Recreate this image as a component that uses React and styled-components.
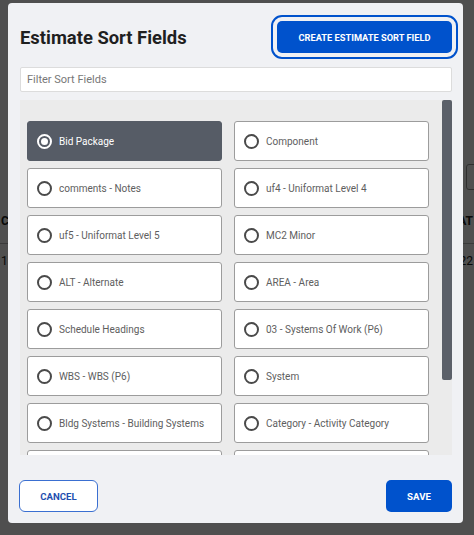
import React, { useState } from 'react'
import styled, { createGlobalStyle } from 'styled-components'

const GlobalStyle = createGlobalStyle`
  html, body {
    margin: 0;
    padding: 0;
    background: #ffffff;
    font-family: Roboto, "Liberation Sans", sans-serif;
  }
  * { box-sizing: border-box; }
`;

const fields = [
    'Bid Package',
    'Component',
    'comments - Notes',
    'uf4 - Uniformat Level 4',
    'uf5 - Uniformat Level 5',
    'MC2 Minor',
    'ALT - Alternate',
    'AREA - Area',
    'Schedule Headings',
    '03 - Systems Of Work (P6)',
    'WBS - WBS (P6)',
    'System',
    'Bldg Systems - Building Systems',
    'Category - Activity Category',
    'Location',
    'Phase',
];

export default function App() {
    const [selected, setSelected] = useState('Bid Package')
    const [filter, setFilter] = useState('')

    const shown = fields.filter((f) => f.toLowerCase().includes(filter.toLowerCase()))

    return (
        <>
            <GlobalStyle />
            <Page>
                <Behind>
                    <div className='toolbar'>
                        <span className='box' />
                    </div>
                    <div className='thead'>
                        <span>C</span>
                        <span>AT</span>
                    </div>
                    <div className='trow'>
                        <span>1</span>
                        <span>22</span>
                    </div>
                </Behind>
                <Overlay>
                    <Dialog>
                        <Header>
                            <Title>Estimate Sort Fields</Title>
                            <PrimaryButton $focused>CREATE ESTIMATE SORT FIELD</PrimaryButton>
                        </Header>
                        <FilterInput
                            placeholder='Filter Sort Fields'
                            value={filter}
                            onChange={(e) => setFilter(e.target.value)}
                        />
                        <Panel>
                            <List>
                                {shown.map((f) => (
                                    <Card key={f} $active={selected === f} onClick={() => setSelected(f)}>
                                        <Radio $active={selected === f} />
                                        <span>{f}</span>
                                    </Card>
                                ))}
                            </List>
                            <Track>
                                <Thumb />
                            </Track>
                        </Panel>
                        <Footer>
                            <OutlineButton>CANCEL</OutlineButton>
                            <PrimaryButton $small>SAVE</PrimaryButton>
                        </Footer>
                    </Dialog>
                </Overlay>
            </Page>
        </>
    )
}

const Page = styled.div`
  position: relative;
  width: 474px;
  height: 535px;
  overflow: hidden;
  background: #ffffff;
`;

const Behind = styled.div`
  padding-top: 164px;
  color: #222;
  font-size: 12px;
  .toolbar {
    height: 34px;
    display: flex;
    justify-content: flex-end;
    .box {
      width: 20px;
      height: 26px;
      margin-right: -12px;
      border: 1px solid #999;
      border-radius: 3px;
    }
  }
  .thead, .trow {
    display: flex;
    justify-content: space-between;
    padding: 0 1px 0 1px;
    height: 46px;
    align-items: center;
    border-bottom: 1px solid #bbb;
    font-weight: 700;
  }
  .trow {
    height: 34px;
    font-weight: 400;
    border-bottom: none;
  }
`;

const Overlay = styled.div`
  position: absolute;
  inset: 0;
  background: rgba(0, 0, 0, 0.69);
  padding: 3px 11px 12px 8px;
  display: flex;
`;

const Dialog = styled.div`
  flex: 1;
  background: #f0f1f4;
  border-radius: 4px;
  display: flex;
  flex-direction: column;
  padding: 18px 11px 11px 12px;
`;

const Header = styled.div`
  display: flex;
  align-items: center;
  justify-content: space-between;
  height: 32px;
`;

const Title = styled.h2`
  margin: 0;
  font-size: 18.4px;
  font-weight: 700;
  color: #1f1f1f;
`;

const PrimaryButton = styled.button`
  height: 32px;
  width: ${(p) => (p.$small ? '66px' : '175px')};
  border: none;
  border-radius: 5px;
  background: #0052cc;
  color: #ffffff;
  font-family: Roboto, "Liberation Sans", sans-serif;
  font-size: ${(p) => (p.$small ? '9.7px' : '9.25px')};
  font-weight: 700;
  cursor: pointer;
  outline: ${(p) => (p.$focused ? '2px solid #0052cc' : 'none')};
  outline-offset: 4px;
`;

const OutlineButton = styled.button`
  height: 32px;
  width: 79px;
  margin-left: -1px;
  border: 1px solid #3a6fd1;
  border-radius: 6px;
  background: #ffffff;
  color: #1f4fb0;
  font-family: Roboto, "Liberation Sans", sans-serif;
  font-size: 9.6px;
  font-weight: 700;
  cursor: pointer;
`;

const FilterInput = styled.input`
  margin-top: 14px;
  height: 25px;
  width: 100%;
  border: 1px solid #dcdcdc;
  border-radius: 2px;
  background: #ffffff;
  padding: 0 6px;
  font-family: Roboto, "Liberation Sans", sans-serif;
  font-size: 11px;
  color: #333;
  outline: none;
  &::placeholder {
    color: #777;
  }
`;

const Panel = styled.div`
  margin-top: 8px;
  height: 355px;
  background: #ebebeb;
  display: flex;
  overflow: hidden;
`;

const List = styled.div`
  flex: 1;
  display: grid;
  grid-template-columns: 1fr 1fr;
  grid-auto-rows: 40px;
  column-gap: 12px;
  row-gap: 7px;
  padding: 21px 0 0 7px;
  overflow: hidden;
`;

const Card = styled.div`
  display: flex;
  align-items: center;
  gap: 7px;
  padding-left: 9px;
  border: 1px solid ${(p) => (p.$active ? '#565c66' : '#9c9c9c')};
  border-radius: 3px;
  background: ${(p) => (p.$active ? '#565c66' : '#ffffff')};
  color: ${(p) => (p.$active ? '#ffffff' : '#5e5e5e')};
  font-size: 10px;
  cursor: pointer;
  white-space: nowrap;
`;

const Radio = styled.span`
  position: relative;
  width: 15px;
  height: 15px;
  flex-shrink: 0;
  border-radius: 50%;
  border: 2px solid ${(p) => (p.$active ? '#ffffff' : '#4a4a4a')};
  &::after {
    content: '';
    display: ${(p) => (p.$active ? 'block' : 'none')};
    position: absolute;
    inset: 2px;
    border-radius: 50%;
    background: #ffffff;
  }
`;

const Track = styled.div`
  width: 10px;
  margin-left: 13px;
`;

const Thumb = styled.div`
  height: 280px;
  background: #5b6069;
  border-radius: 2px;
`;

const Footer = styled.div`
  margin-top: auto;
  display: flex;
  justify-content: space-between;
  align-items: center;
`;
